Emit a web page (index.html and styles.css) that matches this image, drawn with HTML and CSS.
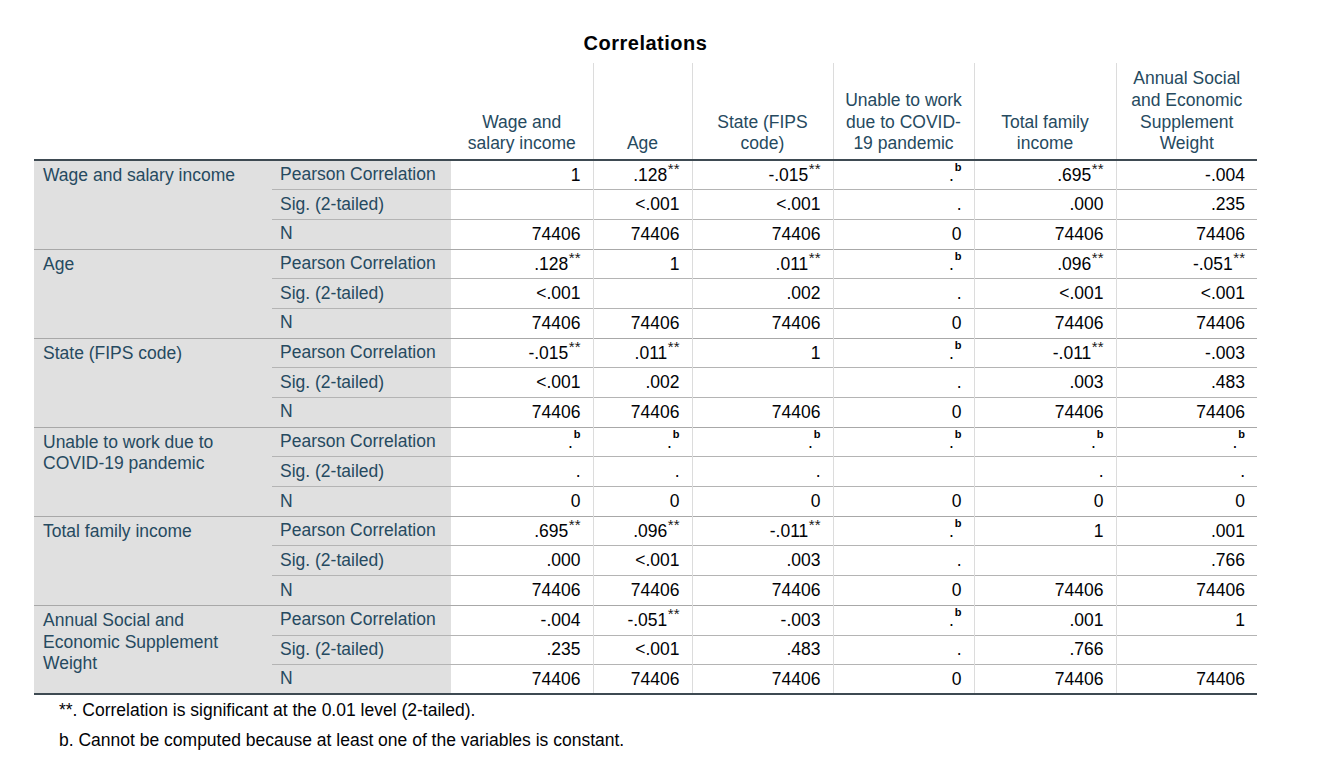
FILE: index.html
```html
<!DOCTYPE html>
<html lang="en">
<head>
<meta charset="utf-8">
<title>Correlations</title>
<link rel="stylesheet" href="styles.css">
</head>
<body>
<div class="output">
  <div class="title-wrap"><div class="title">Correlations</div></div>
  <table class="corr">
    <colgroup>
      <col class="w-var"><col class="w-stat">
      <col class="w-d1"><col class="w-d2"><col class="w-d3"><col class="w-d4"><col class="w-d5"><col class="w-d6">
    </colgroup>
    <thead>
      <tr>
        <th class="blank"></th>
        <th class="blank"></th>
        <th class="first">Wage and<br>salary income</th>
        <th>Age</th>
        <th>State (FIPS<br>code)</th>
        <th>Unable to work<br>due to COVID-<br>19 pandemic</th>
        <th>Total family<br>income</th>
        <th>Annual Social<br>and Economic<br>Supplement<br>Weight</th>
      </tr>
    </thead>
    <tbody>
      <tr class="grp">
        <td class="var" rowspan="3">Wage and salary income</td>
        <td class="stat">Pearson Correlation</td>
        <td class="num first">1</td>
        <td class="num">.128<sup class="sig">**</sup></td>
        <td class="num">-.015<sup class="sig">**</sup></td>
        <td class="num">.<sup class="fn">b</sup></td>
        <td class="num">.695<sup class="sig">**</sup></td>
        <td class="num">-.004</td>
      </tr>
      <tr>
        <td class="stat">Sig. (2-tailed)</td>
        <td class="num first"></td>
        <td class="num">&lt;.001</td>
        <td class="num">&lt;.001</td>
        <td class="num">.</td>
        <td class="num">.000</td>
        <td class="num">.235</td>
      </tr>
      <tr>
        <td class="stat">N</td>
        <td class="num first">74406</td>
        <td class="num">74406</td>
        <td class="num">74406</td>
        <td class="num">0</td>
        <td class="num">74406</td>
        <td class="num">74406</td>
      </tr>

      <tr class="grp">
        <td class="var" rowspan="3">Age</td>
        <td class="stat">Pearson Correlation</td>
        <td class="num first">.128<sup class="sig">**</sup></td>
        <td class="num">1</td>
        <td class="num">.011<sup class="sig">**</sup></td>
        <td class="num">.<sup class="fn">b</sup></td>
        <td class="num">.096<sup class="sig">**</sup></td>
        <td class="num">-.051<sup class="sig">**</sup></td>
      </tr>
      <tr>
        <td class="stat">Sig. (2-tailed)</td>
        <td class="num first">&lt;.001</td>
        <td class="num"></td>
        <td class="num">.002</td>
        <td class="num">.</td>
        <td class="num">&lt;.001</td>
        <td class="num">&lt;.001</td>
      </tr>
      <tr>
        <td class="stat">N</td>
        <td class="num first">74406</td>
        <td class="num">74406</td>
        <td class="num">74406</td>
        <td class="num">0</td>
        <td class="num">74406</td>
        <td class="num">74406</td>
      </tr>

      <tr class="grp">
        <td class="var" rowspan="3">State (FIPS code)</td>
        <td class="stat">Pearson Correlation</td>
        <td class="num first">-.015<sup class="sig">**</sup></td>
        <td class="num">.011<sup class="sig">**</sup></td>
        <td class="num">1</td>
        <td class="num">.<sup class="fn">b</sup></td>
        <td class="num">-.011<sup class="sig">**</sup></td>
        <td class="num">-.003</td>
      </tr>
      <tr>
        <td class="stat">Sig. (2-tailed)</td>
        <td class="num first">&lt;.001</td>
        <td class="num">.002</td>
        <td class="num"></td>
        <td class="num">.</td>
        <td class="num">.003</td>
        <td class="num">.483</td>
      </tr>
      <tr>
        <td class="stat">N</td>
        <td class="num first">74406</td>
        <td class="num">74406</td>
        <td class="num">74406</td>
        <td class="num">0</td>
        <td class="num">74406</td>
        <td class="num">74406</td>
      </tr>

      <tr class="grp">
        <td class="var" rowspan="3">Unable to work due to<br>COVID-19 pandemic</td>
        <td class="stat">Pearson Correlation</td>
        <td class="num first">.<sup class="fn">b</sup></td>
        <td class="num">.<sup class="fn">b</sup></td>
        <td class="num">.<sup class="fn">b</sup></td>
        <td class="num">.<sup class="fn">b</sup></td>
        <td class="num">.<sup class="fn">b</sup></td>
        <td class="num">.<sup class="fn">b</sup></td>
      </tr>
      <tr>
        <td class="stat">Sig. (2-tailed)</td>
        <td class="num first">.</td>
        <td class="num">.</td>
        <td class="num">.</td>
        <td class="num"></td>
        <td class="num">.</td>
        <td class="num">.</td>
      </tr>
      <tr>
        <td class="stat">N</td>
        <td class="num first">0</td>
        <td class="num">0</td>
        <td class="num">0</td>
        <td class="num">0</td>
        <td class="num">0</td>
        <td class="num">0</td>
      </tr>

      <tr class="grp">
        <td class="var" rowspan="3">Total family income</td>
        <td class="stat">Pearson Correlation</td>
        <td class="num first">.695<sup class="sig">**</sup></td>
        <td class="num">.096<sup class="sig">**</sup></td>
        <td class="num">-.011<sup class="sig">**</sup></td>
        <td class="num">.<sup class="fn">b</sup></td>
        <td class="num">1</td>
        <td class="num">.001</td>
      </tr>
      <tr>
        <td class="stat">Sig. (2-tailed)</td>
        <td class="num first">.000</td>
        <td class="num">&lt;.001</td>
        <td class="num">.003</td>
        <td class="num">.</td>
        <td class="num"></td>
        <td class="num">.766</td>
      </tr>
      <tr>
        <td class="stat">N</td>
        <td class="num first">74406</td>
        <td class="num">74406</td>
        <td class="num">74406</td>
        <td class="num">0</td>
        <td class="num">74406</td>
        <td class="num">74406</td>
      </tr>

      <tr class="grp">
        <td class="var last-var" rowspan="3">Annual Social and<br>Economic Supplement<br>Weight</td>
        <td class="stat">Pearson Correlation</td>
        <td class="num first">-.004</td>
        <td class="num">-.051<sup class="sig">**</sup></td>
        <td class="num">-.003</td>
        <td class="num">.<sup class="fn">b</sup></td>
        <td class="num">.001</td>
        <td class="num">1</td>
      </tr>
      <tr>
        <td class="stat">Sig. (2-tailed)</td>
        <td class="num first">.235</td>
        <td class="num">&lt;.001</td>
        <td class="num">.483</td>
        <td class="num">.</td>
        <td class="num">.766</td>
        <td class="num"></td>
      </tr>
      <tr class="last">
        <td class="stat">N</td>
        <td class="num first">74406</td>
        <td class="num">74406</td>
        <td class="num">74406</td>
        <td class="num">0</td>
        <td class="num">74406</td>
        <td class="num">74406</td>
      </tr>
    </tbody>
  </table>
  <div class="notes">
    <div class="note">**. Correlation is significant at the 0.01 level (2-tailed).</div>
    <div class="note">b. Cannot be computed because at least one of the variables is constant.</div>
  </div>
</div>
</body>
</html>
```
FILE: styles.css
```css
html, body {
  margin: 0;
  padding: 0;
  background: #ffffff;
}

body {
  font-family: "Liberation Sans", Arial, sans-serif;
  font-size: 17.5px;
  color: #264a60;
}

.output {
  padding: 31px 0 0 34px;
  width: 1223px;
}

.title-wrap {
  display: flex;
  justify-content: center;
  margin-bottom: 8px;
}

.title {
  font-weight: bold;
  font-size: 20px;
  line-height: 24px;
  letter-spacing: 0.5px;
  color: #010205;
}

.corr {
  border-collapse: collapse;
  table-layout: fixed;
  width: 1223px;
}

.w-var  { width: 238px; }
.w-stat { width: 179px; }
.w-d1   { width: 142px; }
.w-d2   { width: 99px; }
.w-d3   { width: 141px; }
.w-d4   { width: 141px; }
.w-d5   { width: 142px; }
.w-d6   { width: 141px; }

.corr thead {
  border-bottom: 2px solid #3e4a52;
}

.corr th {
  height: 92px;
  padding: 0 2px 4px;
  vertical-align: bottom;
  text-align: center;
  font-weight: normal;
  line-height: 21.7px;
  color: #264a60;
  border-left: 1px solid #dcdcdc;
}

.corr th.blank,
.corr th.first {
  border-left: none;
}

.corr tbody tr {
  height: 29.7px;
}

.corr td {
  padding: 0;
  line-height: 21.7px;
  white-space: nowrap;
}

.corr td.var {
  background: #e0e0e0;
  vertical-align: top;
  padding: 4px 8px 0 9px;
  color: #264a60;
}

.corr td.stat {
  background: #e0e0e0;
  padding: 0 8px;
  color: #264a60;
  border-top: 1px solid #b4b4b4;
  vertical-align: middle;
}

.corr td.num {
  text-align: right;
  padding: 1px 12px 0 0;
  color: #010205;
  border-top: 1px solid #b4b4b4;
  border-left: 1px solid #dcdcdc;
  vertical-align: middle;
}

.corr td.num.first {
  border-left: none;
}

.corr tr.grp td {
  border-top: 1px solid #a8a8a8;
}

.corr tbody tr:first-child td {
  border-top: none;
}

.corr tr.last td,
.corr td.last-var {
  border-bottom: 2px solid #3e4a52;
}

sup.sig {
  font-size: 15px;
  line-height: 0;
  vertical-align: 7px;
  margin-left: 0.5px;
  color: #1a1a1a;
}

sup.fn {
  font-size: 11px;
  font-weight: bold;
  line-height: 0;
  vertical-align: 10px;
  margin-left: 1px;
}

.notes {
  padding-left: 25px;
}

.note {
  line-height: 30px;
  color: #010205;
  white-space: nowrap;
}
```
